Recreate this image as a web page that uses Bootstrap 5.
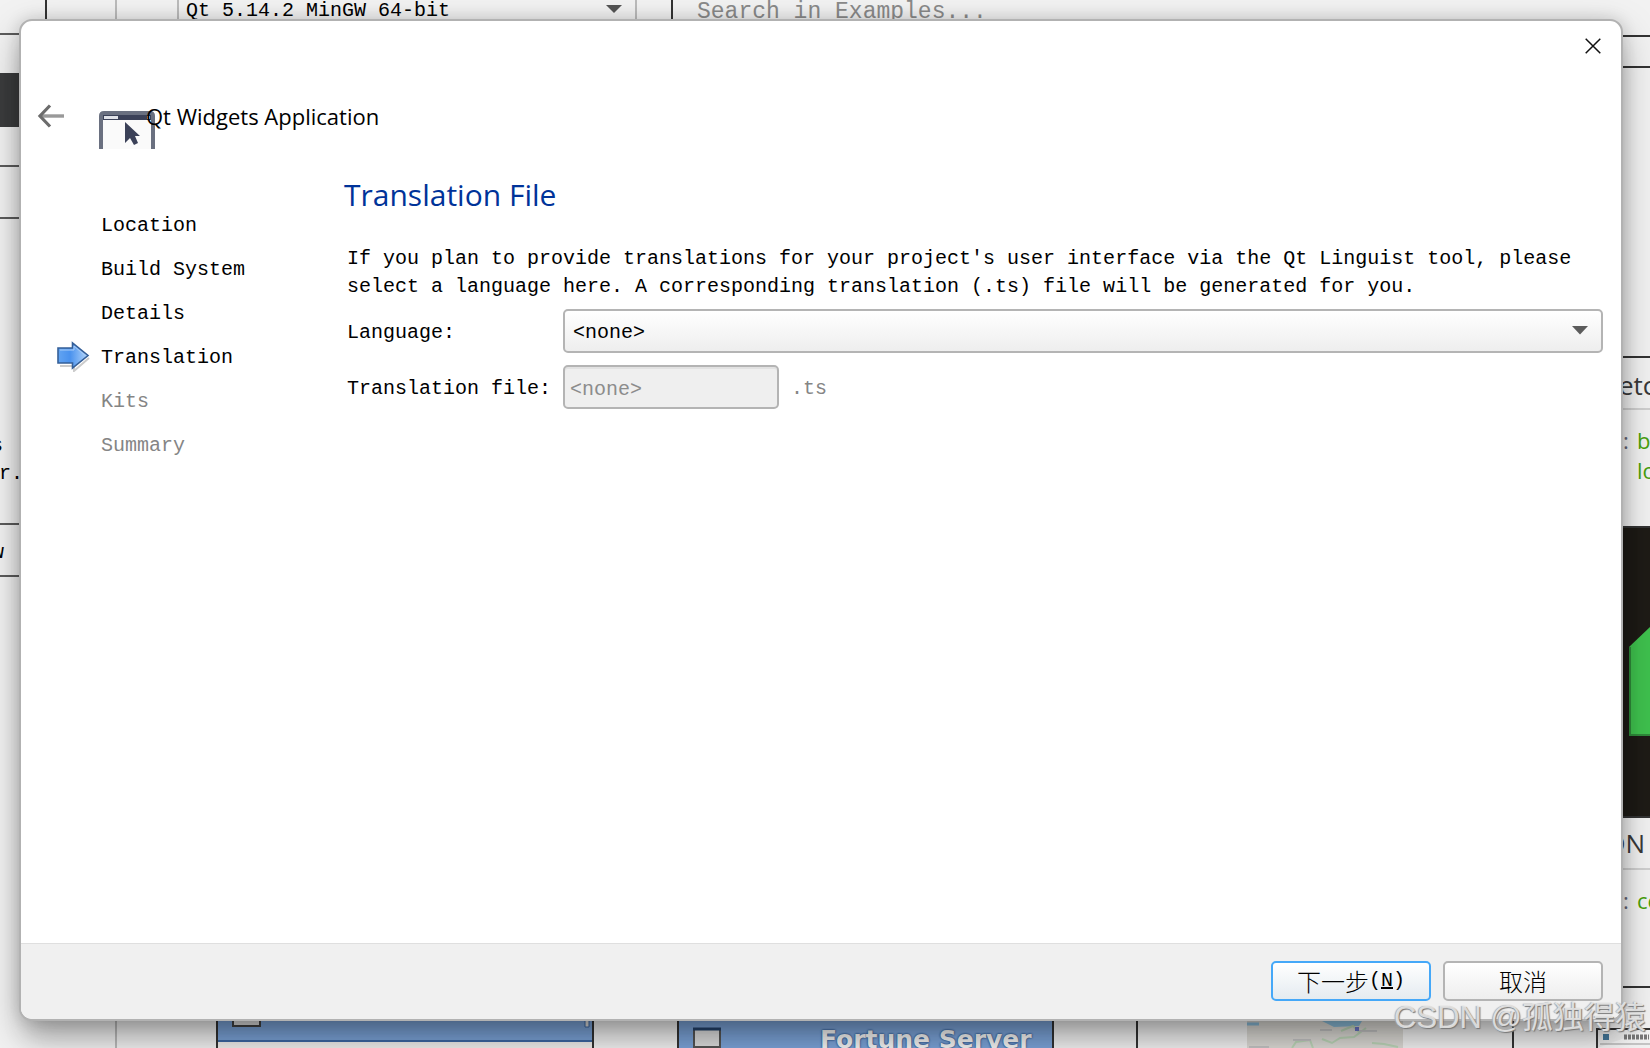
<!DOCTYPE html>
<html lang="en">
<head>
<meta charset="utf-8">
<meta name="viewport" content="width=device-width, initial-scale=1">
<title>Qt Widgets Application</title>
<link href="https://cdn.jsdelivr.net/npm/bootstrap@5.3.0/dist/css/bootstrap.min.css" rel="stylesheet">
<style>
  body { font-family: "Liberation Mono", "Noto Sans CJK SC", monospace; font-size: 20px; line-height: 28px; color: #000; background: #f2f2f2; }
  .ui-sans { font-family: "Open Sans", "Noto Sans", sans-serif; }
  .cjk { font-family: "Noto Sans CJK SC", sans-serif; font-weight: 300; font-size: 24px; }

  /* application behind the dialog */
  .strip-top { height: 19px; }
  .strip-top > div, .strip-bottom > div { flex: none; }
  .strip-left { width: 19px; flex: none; text-align: right; }
  .strip-right { width: 27px; flex: none; }
  .strip-left > div, .strip-right > div { flex: none; border-bottom: 2px solid #5c5c5c; }
  .strip-right > div { border-color: #333; }
  .strip-left > div.tail, .strip-right > div.tail { flex: 1 1 0; border: 0; }
  .strip-bottom { height: 27px; }
  .cell-line { border-right: 2px solid #333; }
  .soft-line { border-right: 2px solid #bbb; }
  .kit-select { width: 458px; padding-left: 7px; border-right: 2px solid #bbb; line-height: 22px; }
  .kit-select svg { margin-right: 13px; }
  .search-box { font-size: 23px; line-height: 24px; color: #8a8a8a; padding-left: 24px; }
  .dark-band { background: #3b3c3d; }
  .strip-right > div.light-rule { border-color: #d0d0d0; }
  .thumb-dark { background: #1e1b16; height: 290px; }
  .card-title-text { font-size: 26px; line-height: 30px; color: #3a3a3a; }
  .tag-text { font-size: 22px; line-height: 30px; color: #48a00c; padding-left: 14px; }
  .tag-colon { width: 14px; flex: none; color: #667; }
  .tag-colon + .tag-text { padding-left: 0; }
  .thumb-blue { background: #7ba3d8; border: solid #333; border-width: 0 2px; width: 378px; }
  .thumb-blue .blue-rule { background: #f0efed; border-top: 2px solid #3c68a5; height: 8px; }
  .thumb-title { font: bold 25px/26px "DejaVu Sans", sans-serif; color: #f4f4f4; text-shadow: 0 0 2px #254f88, 0 0 2px #254f88; }

  /* wizard dialog */
  .wizard { z-index: 1; border: 2px solid #b2b2b2; border-radius: 13px; background: #fff; box-shadow: 0 0 16px rgba(0, 0, 0, .14), 0 14px 38px rgba(0, 0, 0, .26), 0 24px 24px -8px rgba(0, 0, 0, .16); }
  .close-btn, .back-btn { border: 0; background: none; padding: 0; line-height: 0; }
  .title-row { padding: 17px 20px 0; }
  .head-row { height: 77px; margin-top: 30px; padding-left: 16px; }
  .back-btn { margin-top: 19px; }
  .wizard-name { font-size: 22px; line-height: 30px; margin: 17px 0 0 -10px; }
  .app-icon { margin: 26px 0 0 33px; }
  .steps { width: 323px; flex: none; padding: 43px 0 0 31px; }
  .steps li { height: 44px; }
  .steps .mark-slot { width: 49px; flex: none; line-height: 0; padding: 0 0 3px 5px; }
  .steps .pending { color: #858585; }
  .page-area { padding-right: 18px; }
  .page-title { font-size: 30px; line-height: 44px; color: #003399; margin: 12px 0 28px; }
  .page-text { padding-left: 3px; margin-bottom: 8px; }
  .field-row label { width: 219px; flex: none; padding: 4px 0 0 3px; }
  .combo, .file-name { height: 44px; border: 2px solid #b4b4b4; border-radius: 5px; font-size: 20px; line-height: 28px; }
  .combo { appearance: none; background: linear-gradient(#fff, #eee); color: #000; padding: 8px 8px 4px; }
  .combo-arrow { position: absolute; right: 15px; top: 17px; pointer-events: none; }
  .file-name { width: 216px; padding: 8px 5px 4px; background: #efefef; color: #8c8c8c; box-shadow: inset 0 2px 0 #e2e2e2; }
  .file-ext { color: #858585; margin-left: 12px; padding-top: 4px; }
  .wizard-foot { background: #f0f0f0; border-top: 1px solid #dfdfdf; border-radius: 0 0 11px 11px; padding: 17px 18px 18px; gap: 12px; }
  .foot-btn { width: 160px; height: 40px; padding: 0; font-size: 20px; line-height: 34px; border: 2px solid #b4b4b4; border-radius: 5px; background: linear-gradient(#fff, #eee); color: #000; }
  .foot-btn.primary { border-color: #45a8f8; background: linear-gradient(#fff, #e4ebf0); }
  .watermark { position: absolute; right: 4px; bottom: 12px; z-index: 2; font: 31px/36px "Liberation Sans", "Noto Sans CJK SC", sans-serif; color: rgba(235, 235, 235, .85); text-shadow: 1px 1px 1px #777, -1px 0 1px #aaa; pointer-events: none; }
</style>
<script src="https://cdn.jsdelivr.net/npm/bootstrap@5.3.0/dist/js/bootstrap.bundle.min.js"></script>
</head>
<body>
<div class="d-flex flex-column min-vh-100 position-relative overflow-hidden">

  <div class="strip-top d-flex">
    <div class="cell-line" style="width:47px"></div>
    <div class="soft-line" style="width:70px"></div>
    <div class="soft-line" style="width:62px"></div>
    <div class="kit-select d-flex justify-content-between">
      <span>Qt 5.14.2 MinGW 64-bit</span>
      <svg width="16" height="14" viewBox="0 0 16 14" aria-hidden="true"><path d="M0 5h16l-8 8z" fill="#555"/></svg>
    </div>
    <div class="cell-line" style="width:36px"></div>
    <div class="search-box">Search in Examples...</div>
  </div>

  <div class="d-flex flex-fill">
    <div class="strip-left d-flex flex-column">
      <div style="height:16px"></div>
      <div class="border-0" style="height:38px"></div>
      <div class="border-0 dark-band" style="height:54px"></div>
      <div style="height:40px"></div>
      <div style="height:52px"></div>
      <div class="d-flex flex-column align-items-end" style="height:306px;padding-top:213px">
        <span style="margin-right:16px">s</span>
        <span style="margin-right:-4px">or.</span>
      </div>
      <div class="d-flex justify-content-end" style="height:52px;padding:14px 15px 0 0"><span>w</span></div>
      <div class="tail"></div>
    </div>

    <main class="wizard position-relative d-flex flex-column flex-fill">
      <div class="title-row d-flex justify-content-end">
        <button class="close-btn" type="button" aria-label="Close">
          <svg width="16" height="16" viewBox="0 0 16 16"><path d="M.7.7l14.6 14.6M15.3.7L.7 15.3" stroke="#111" stroke-width="1.5"/></svg>
        </button>
      </div>
      <header class="head-row d-flex align-items-start">
        <button class="back-btn" type="button" aria-label="Back">
          <svg width="28" height="26" viewBox="0 0 28 26"><path d="M3 13h24" stroke="#999" stroke-width="3.4"/><path d="M13 2.500L3 13l10 10.500" fill="none" stroke="#6c6c6c" stroke-width="3.2"/></svg>
        </button>
        <svg class="app-icon" width="58" height="39" viewBox="0 0 58 39" aria-hidden="true">
          <path d="M1 39V6q0-5 5-5h46q5 0 5 5v33z" fill="#6a7080"/>
          <path d="M5 10h48v29H5z" fill="#fafafa"/><path d="M5 5h48v5H5z" fill="#3b4158"/>
          <path d="M6 6h14v3H6zM49 6h3v3h-3z" fill="#e0e2e8"/>
          <path d="M27 12v21l5-5 4 7 4-2-3-7h5z" fill="#3b4158"/>
        </svg>
        <div class="wizard-name ui-sans">Qt Widgets Application</div>
      </header>

      <div class="d-flex flex-fill">
        <ul class="steps list-unstyled mb-0">
          <li class="d-flex align-items-center"><span class="mark-slot"></span>Location</li>
          <li class="d-flex align-items-center"><span class="mark-slot"></span>Build System</li>
          <li class="d-flex align-items-center"><span class="mark-slot"></span>Details</li>
          <li class="d-flex align-items-center" aria-current="step"><span class="mark-slot">
            <svg width="34" height="31" viewBox="0 0 34 31" aria-hidden="true">
              <defs><linearGradient id="g" x1="0" x2="1"><stop offset="0" stop-color="#62a4f2"/><stop offset=".4" stop-color="#4a92ee"/><stop offset="1" stop-color="#b4d6fb"/></linearGradient></defs>
              <path d="M3 25h14v5l15-13" fill="none" stroke="#ccc" stroke-width="2"/>
              <path d="M1 7h14.500V2L31 14.500 15.500 27v-5H1z" fill="url(#g)" stroke="#355f98" stroke-width="1.600"/>
              <path d="M3 9h14V5l11 9.500" fill="none" stroke="#a9cdf8" stroke-width="1"/>
            </svg></span>Translation</li>
          <li class="d-flex align-items-center pending"><span class="mark-slot"></span>Kits</li>
          <li class="d-flex align-items-center pending"><span class="mark-slot"></span>Summary</li>
        </ul>

        <section class="page-area flex-fill">
          <h1 class="page-title ui-sans fw-normal">Translation File</h1>
          <p class="page-text">If you plan to provide translations for your project's user interface via the Qt Linguist tool, please select a language here. A corresponding translation (.ts) file will be generated for you.</p>
          <form class="d-flex flex-column gap-2">
            <div class="field-row d-flex align-items-center mb-1">
              <label for="lang">Language:</label>
              <div class="position-relative flex-fill">
                <select class="combo w-100 d-block" id="lang"><option>&lt;none&gt;</option></select>
                <svg class="combo-arrow" width="16" height="9" viewBox="0 0 16 9" aria-hidden="true"><path d="M0 0h16L8 8.500z" fill="#5c5c5c"/></svg>
              </div>
            </div>
            <div class="field-row d-flex align-items-center">
              <label for="tsfile">Translation file:</label>
              <input class="file-name" id="tsfile" type="text" value="&lt;none&gt;" disabled>
              <span class="file-ext">.ts</span>
            </div>
          </form>
        </section>
      </div>

      <footer class="wizard-foot d-flex justify-content-end">
        <button class="foot-btn primary d-flex align-items-center justify-content-center" type="button"><span class="cjk">下一步</span><span>(<u>N</u>)</span></button>
        <button class="foot-btn d-flex align-items-center justify-content-center" type="button"><span class="cjk">取消</span></button>
      </footer>
    </main>

    <div class="strip-right d-flex flex-column">
      <div style="height:18px"></div>
      <div style="height:31px"></div>
      <div style="height:290px"></div>
      <div class="light-rule card-title-text ui-sans" style="height:52px;padding-top:12px"><span style="margin-left:-4px">etc</span></div>
      <div style="height:118px;padding-top:15px">
        <div class="d-flex"><span class="tag-colon tag-text ui-sans p-0">:</span><span class="tag-text ui-sans">b</span></div>
        <div class="tag-text ui-sans">lo</div>
      </div>
      <div class="thumb-dark">
        <svg width="27" height="288" viewBox="0 0 27 288" aria-hidden="true" class="d-block"><path d="M6 119L27 99v109H6z" fill="#3fc14e"/><path d="M7 119v88h20" fill="none" stroke="#2f8a3a" stroke-width="2"/></svg>
      </div>
      <div class="light-rule card-title-text ui-sans d-flex justify-content-end" style="height:52px;padding:10px 5px 0 0"><span>ON</span></div>
      <div style="height:118px;padding-top:15px">
        <div class="d-flex"><span class="tag-colon tag-text ui-sans p-0">:</span><span class="tag-text ui-sans">co</span></div>
      </div>
      <div class="tail"></div>
    </div>
  </div>

  <div class="strip-bottom d-flex overflow-hidden">
    <div class="soft-line" style="width:117px"></div>
    <div style="width:99px"></div>
    <div class="thumb-blue d-flex flex-column justify-content-between">
      <svg width="374" height="7" viewBox="0 0 374 7" aria-hidden="true"><path d="M15-1h27v6H15z" fill="#ddd" stroke="#444" stroke-width="2"/><path d="M367-1h4v7h-4z" fill="#ddd" stroke="#3c68a5"/></svg>
      <div class="blue-rule"></div>
    </div>
    <div style="width:83px"></div>
    <div class="thumb-blue d-flex" style="width:377px">
      <svg width="141" height="27" viewBox="0 0 141 27" aria-hidden="true"><path d="M15 8h26v18H15z" fill="#ddd" stroke="#555" stroke-width="2"/><path d="M14 8h28" stroke="#24436c" stroke-width="3"/></svg>
      <span class="thumb-title" style="padding-top:6px">Fortune Server</span>
    </div>
    <div class="cell-line" style="width:84px"></div>
    <div style="width:109px"></div>
    <div>
      <svg class="d-block" width="156" height="27" viewBox="0 0 156 27" aria-hidden="true"><path d="M0 0h156v27H0z" fill="#dcdad5"/><path d="M75 0h40l-3 5-25 1z" fill="#8dbfdc"/><path d="M0 3h12" stroke="#8dbfdc" stroke-width="3"/><path d="M45 27l4-6 14-2 3 8M75 18l10 4 8-5 14-1 12-9M94 10l12-5 6 6M125 22l12 1 14 3" fill="none" stroke="#bcd6b8" stroke-width="2"/><path d="M108 6h4v4h-4z" fill="#6c77c8"/><path d="M73 9h12M46 19h18M2 26h20M112 10h18" stroke="#c4c4c4" stroke-width="2"/></svg>
    </div>
    <div class="cell-line" style="width:111px"></div>
    <div style="width:82px"></div>
    <div class="flex-fill">
      <svg class="d-block" width="54" height="27" viewBox="0 0 54 27" aria-hidden="true"><path d="M1 27V8h53" fill="#e8e8e8" stroke="#333" stroke-width="2"/><path d="M7 13h6v6H7z" fill="#479"/><path d="M28 16h25" stroke="#777" stroke-width="5" stroke-dasharray="3 1"/><path d="M4 23h50" stroke="#999"/></svg>
    </div>
  </div>

  <div class="watermark">CSDN @孤独得猿</div>
</div>
</body>
</html>
